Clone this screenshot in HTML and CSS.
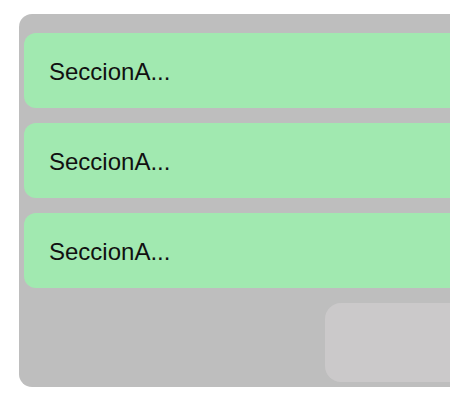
FILE: index.html
```html
<!DOCTYPE html>
<html>
<head>
<meta charset="utf-8">
<link rel="stylesheet" href="styles.css">
</head>
<body>
<div class="viewport">
  <div class="panel">
    <div class="section"><span class="label">SeccionA...</span></div>
    <div class="section"><span class="label">SeccionA...</span></div>
    <div class="section"><span class="label">SeccionA...</span></div>
    <div class="button"></div>
  </div>
</div>
</body>
</html>
```
FILE: styles.css
```css
html, body {
  margin: 0;
  padding: 0;
  background: #ffffff;
}
.viewport {
  width: 450px;
  height: 410px;
  overflow: hidden;
  padding: 14px 0 0 19px;
  box-sizing: border-box;
}
.panel {
  width: 520px;
  height: 373px;
  box-sizing: border-box;
  background: #bebebe;
  border-radius: 13px;
  padding: 19px 0 0 5px;
  display: flex;
  flex-direction: column;
  gap: 15px;
}
.section {
  height: 75px;
  background: #a1e9b0;
  border-radius: 12px;
  display: flex;
  align-items: center;
  padding-left: 25px;
  padding-top: 2px;
  box-sizing: border-box;
}
.label {
  font-family: "Liberation Sans", Arial, sans-serif;
  font-size: 24px;
  color: #111111;
}
.button {
  margin-left: 301px;
  height: 79px;
  background: #cbc9ca;
  border-radius: 16px;
}
```
